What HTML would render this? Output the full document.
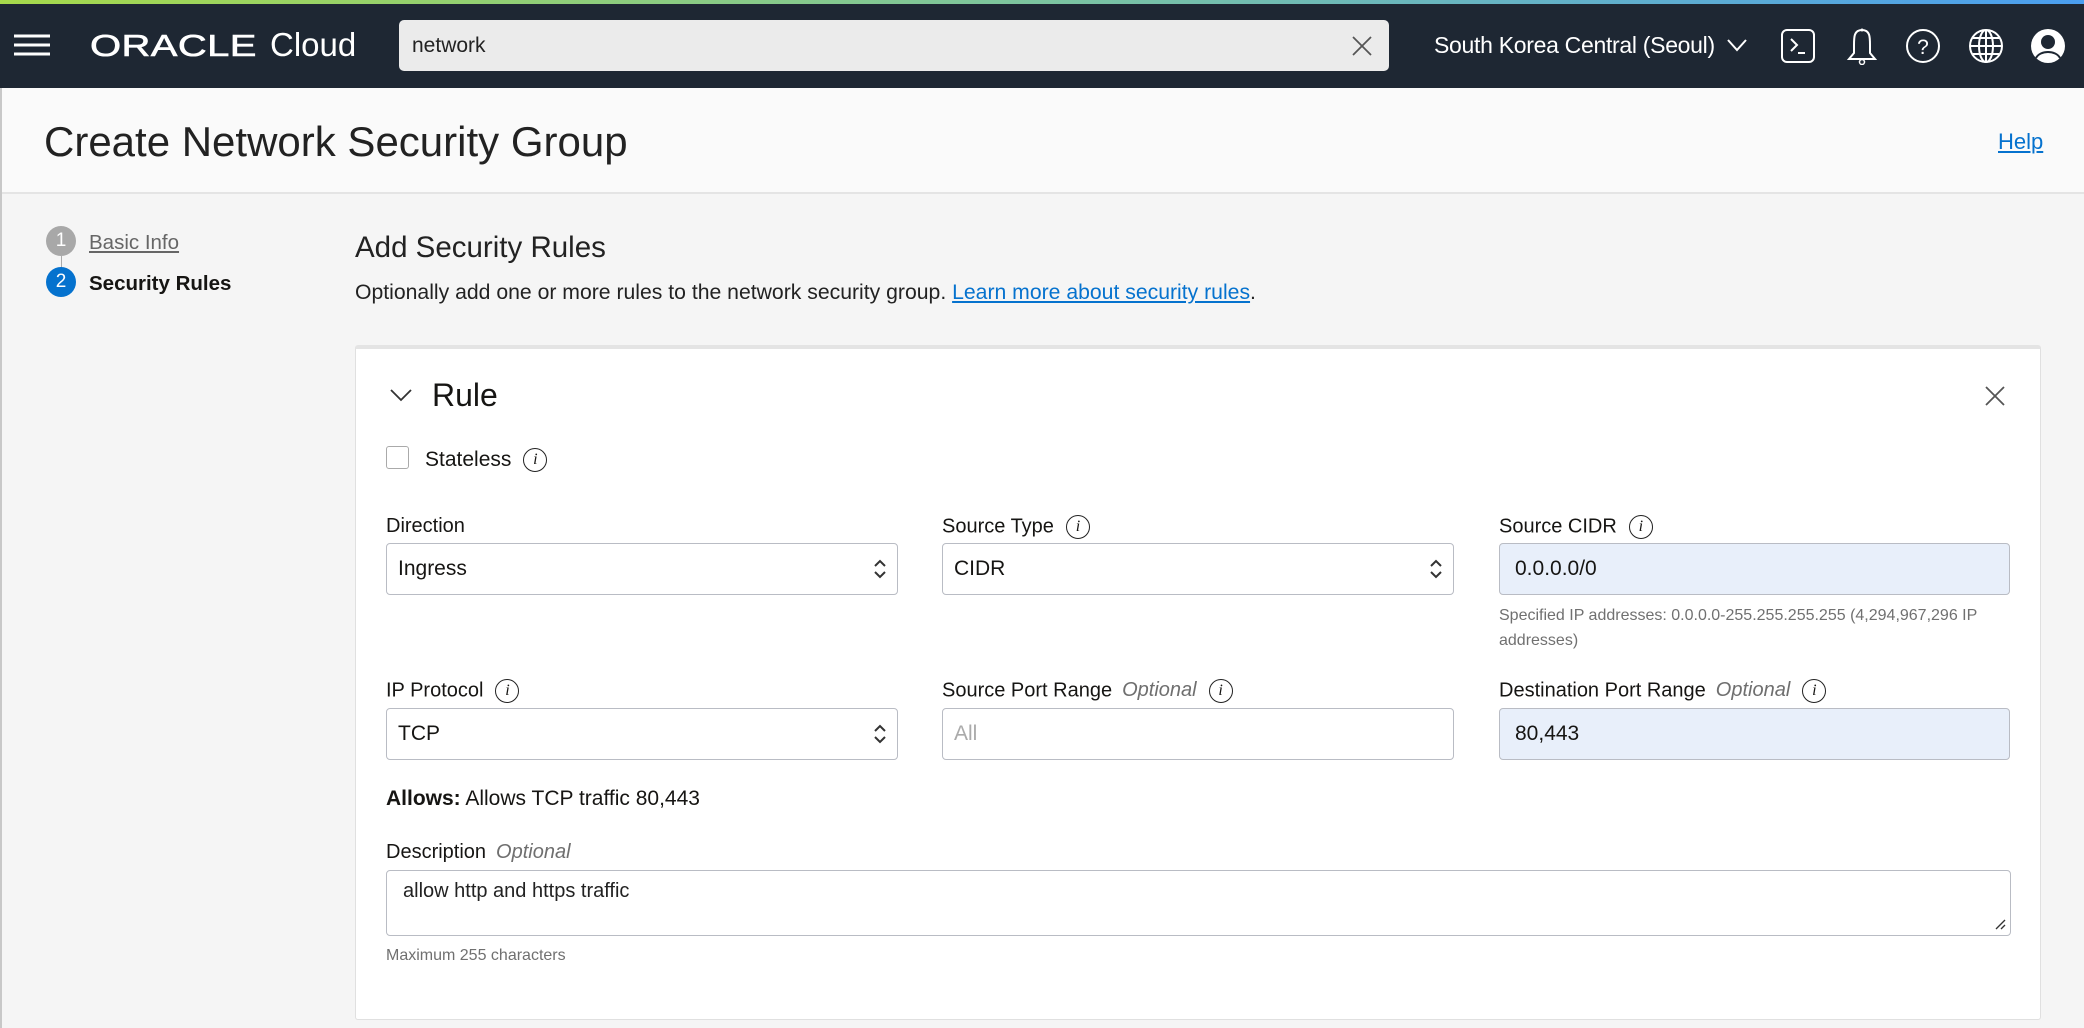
<!DOCTYPE html>
<html><head><meta charset="utf-8">
<style>
*{box-sizing:border-box;margin:0;padding:0}
body{width:2084px;height:1028px;overflow:hidden;background:#f5f5f5;font-family:"Liberation Sans",sans-serif;color:#161513;position:relative}
.a{position:absolute;white-space:nowrap}
.grad{left:0;top:0;width:2084px;height:4px;background:linear-gradient(90deg,#a6d94b,#7cc4a0 50%,#4a9ef0)}
.nav{left:0;top:4px;width:2084px;height:84px;background:#1e2733}
.hdr{left:0;top:88px;width:2084px;height:106px;background:#fafafa;border-bottom:2px solid #e4e4e4}
.lb{left:0;top:88px;width:2px;height:940px;background:#c8c8c8}
.lbl{font-size:20px;color:#161513}
.opt{font-style:italic;color:#6f6f6f;margin-left:10px}
.info{display:inline-block;width:24px;height:24px;border:1.6px solid #222;border-radius:50%;font-size:16px;font-style:italic;text-align:center;line-height:21px;font-family:"Liberation Serif",serif;vertical-align:middle;margin-left:12px}
.inp{position:absolute;height:52px;border:1.5px solid #b9bcc4;border-radius:4px;background:#fff;font-size:21px;padding-left:11px;line-height:50px}
.blue{background:#e8effa;padding-left:15px}
.arr{position:absolute;right:10px;top:14px}
</style></head><body>
<div class="a grad"></div>
<div class="a nav"></div>
<svg class="a" style="left:14px;top:33px" width="36" height="24"><g stroke="#fff" stroke-width="3"><line x1="0" y1="3" x2="36" y2="3"/><line x1="0" y1="12" x2="36" y2="12"/><line x1="0" y1="21" x2="36" y2="21"/></g></svg>
<div class="a" style="left:90px;top:28px;color:#fff;font-size:31px;line-height:36px;transform:scaleX(1.29);transform-origin:left;letter-spacing:0.3px;-webkit-text-stroke:0.6px #fff">ORACLE</div>
<div class="a" style="left:270px;top:27px;color:#fff;font-size:33px;line-height:36px">Cloud</div>
<div class="a" style="left:399px;top:20px;width:990px;height:51px;background:#ebebeb;border-radius:5px"></div>
<div class="a" style="left:412px;top:34px;font-size:21px;color:#222">network</div>
<svg class="a" style="left:1352px;top:36px" width="20" height="20"><g stroke="#555" stroke-width="1.8"><line x1="1" y1="1" x2="19" y2="19"/><line x1="19" y1="1" x2="1" y2="19"/></g></svg>
<div class="a" style="left:1434px;top:32px;font-size:23px;color:#fff;letter-spacing:-0.3px">South Korea Central (Seoul)</div>
<svg class="a" style="left:1727px;top:38px" width="20" height="14"><polyline points="1,2 10,12 19,2" fill="none" stroke="#fff" stroke-width="2"/></svg>
<svg class="a" style="left:1780px;top:28px" width="36" height="36"><rect x="2" y="2" width="32" height="32" rx="5" fill="none" stroke="#fff" stroke-width="2"/><polyline points="11,11 17,17 11,23" fill="none" stroke="#fff" stroke-width="2"/><line x1="18" y1="25" x2="25" y2="25" stroke="#fff" stroke-width="2"/></svg>
<svg class="a" style="left:1845px;top:27px" width="34" height="38"><path d="M17 3 C9 3 9 10 9 18 L9 26 L4 32 L30 32 L25 26 L25 18 C25 10 25 3 17 3Z" fill="none" stroke="#fff" stroke-width="2"/><circle cx="17" cy="35" r="2.5" fill="none" stroke="#fff" stroke-width="1.5"/><circle cx="17" cy="3" r="1.5" fill="#fff"/></svg>
<svg class="a" style="left:1905px;top:28px" width="36" height="36"><circle cx="18" cy="18" r="16" fill="none" stroke="#fff" stroke-width="2"/><text x="18" y="26" text-anchor="middle" fill="#fff" font-size="21" font-family="Liberation Sans">?</text></svg>
<svg class="a" style="left:1968px;top:28px" width="36" height="36"><g fill="none" stroke="#fff" stroke-width="2"><circle cx="18" cy="18" r="16"/><ellipse cx="18" cy="18" rx="7" ry="16"/><line x1="18" y1="2" x2="18" y2="34"/><line x1="2" y1="18" x2="34" y2="18"/><line x1="5" y1="10" x2="31" y2="10"/><line x1="5" y1="26" x2="31" y2="26"/></g></svg>
<svg class="a" style="left:2030px;top:28px" width="36" height="36"><circle cx="18" cy="18" r="17" fill="#fff"/><circle cx="18" cy="14" r="7" fill="#1e2733"/><path d="M6 30 C10 22 26 22 30 30" fill="none" stroke="#1e2733" stroke-width="2"/></svg>

<div class="a hdr"></div>
<div class="a lb"></div>
<div class="a" style="left:44px;top:118px;font-size:42px;color:#222">Create Network Security Group</div>
<div class="a" style="left:1998px;top:129px;font-size:22px;color:#0572ce;text-decoration:underline">Help</div>

<div class="a" style="left:61px;top:256px;width:1px;height:14px;background:#aaa"></div>
<div class="a" style="left:46px;top:226px;width:30px;height:30px;border-radius:50%;background:#a8a8a8;color:#fff;font-size:19px;text-align:center;line-height:30px">1</div>
<div class="a" style="left:89px;top:231px;font-size:20.5px;color:#666;text-decoration:underline">Basic Info</div>
<div class="a" style="left:46px;top:267px;width:30px;height:30px;border-radius:50%;background:#0572ce;color:#fff;font-size:19px;text-align:center;line-height:30px">2</div>
<div class="a" style="left:89px;top:272px;font-size:20.5px;font-weight:bold;color:#161513">Security Rules</div>

<div class="a" style="left:355px;top:231px;font-size:29.5px;color:#222">Add Security Rules</div>
<div class="a" style="left:355px;top:281px;font-size:21.2px;color:#222">Optionally add one or more rules to the network security group. <span style="color:#0572ce;text-decoration:underline">Learn more about security rules</span>.</div>

<div class="a" style="left:355px;top:345px;width:1686px;height:675px;background:#fff;border:1px solid #e0e0e0;border-top:4px solid #e4e4e4;border-radius:3px"></div>
<svg class="a" style="left:390px;top:388px" width="22" height="14"><polyline points="1,2 11,12 21,2" fill="none" stroke="#333" stroke-width="1.8"/></svg>
<div class="a" style="left:432px;top:377px;font-size:32px;color:#161513">Rule</div>
<svg class="a" style="left:1985px;top:386px" width="20" height="20"><g stroke="#555" stroke-width="1.8"><line x1="1" y1="1" x2="19" y2="19"/><line x1="19" y1="1" x2="1" y2="19"/></g></svg>

<div class="a" style="left:386px;top:446px;width:23px;height:23px;border:1.5px solid #aaa;border-radius:3px;background:#fff"></div>
<div class="a lbl" style="left:425px;top:448px;font-size:21px">Stateless<span class="info">i</span></div>

<div class="a lbl" style="left:386px;top:515px">Direction</div>
<div class="a lbl" style="left:942px;top:515px">Source Type<span class="info">i</span></div>
<div class="a lbl" style="left:1499px;top:515px">Source CIDR<span class="info">i</span></div>

<div class="inp" style="left:386px;top:543px;width:512px">Ingress<svg class="arr" width="14" height="22"><polyline points="2,8 7,3 12,8" fill="none" stroke="#333" stroke-width="2"/><polyline points="2,14 7,19 12,14" fill="none" stroke="#333" stroke-width="2"/></svg></div>
<div class="inp" style="left:942px;top:543px;width:512px">CIDR<svg class="arr" width="14" height="22"><polyline points="2,8 7,3 12,8" fill="none" stroke="#333" stroke-width="2"/><polyline points="2,14 7,19 12,14" fill="none" stroke="#333" stroke-width="2"/></svg></div>
<div class="inp blue" style="left:1499px;top:543px;width:511px">0.0.0.0/0</div>
<div class="a" style="left:1499px;top:603px;font-size:16px;color:#707070;line-height:25px;white-space:normal;width:510px">Specified IP addresses: 0.0.0.0-255.255.255.255 (4,294,967,296 IP addresses)</div>

<div class="a lbl" style="left:386px;top:679px">IP Protocol<span class="info">i</span></div>
<div class="a lbl" style="left:942px;top:679px">Source Port Range<span class="opt">Optional</span><span class="info">i</span></div>
<div class="a lbl" style="left:1499px;top:679px">Destination Port Range<span class="opt">Optional</span><span class="info">i</span></div>

<div class="inp" style="left:386px;top:708px;width:512px">TCP<svg class="arr" width="14" height="22"><polyline points="2,8 7,3 12,8" fill="none" stroke="#333" stroke-width="2"/><polyline points="2,14 7,19 12,14" fill="none" stroke="#333" stroke-width="2"/></svg></div>
<div class="inp" style="left:942px;top:708px;width:512px;color:#aaa">All</div>
<div class="inp blue" style="left:1499px;top:708px;width:511px">80,443</div>

<div class="a" style="left:386px;top:787px;font-size:21px"><b>Allows:</b> Allows TCP traffic 80,443</div>
<div class="a lbl" style="left:386px;top:841px">Description<span class="opt">Optional</span></div>
<div class="a" style="left:386px;top:870px;width:1625px;height:66px;border:1.5px solid #b9bcc4;border-radius:4px;background:#fff"></div>
<div class="a" style="left:403px;top:880px;font-size:20px;color:#222">allow http and https traffic</div>
<svg class="a" style="left:1994px;top:918px" width="12" height="12"><g stroke="#333" stroke-width="1.3"><line x1="2" y1="11" x2="11" y2="2"/><line x1="7" y1="11" x2="11" y2="7"/></g></svg>
<div class="a" style="left:386px;top:947px;font-size:16px;color:#707070">Maximum 255 characters</div>
</body></html>
